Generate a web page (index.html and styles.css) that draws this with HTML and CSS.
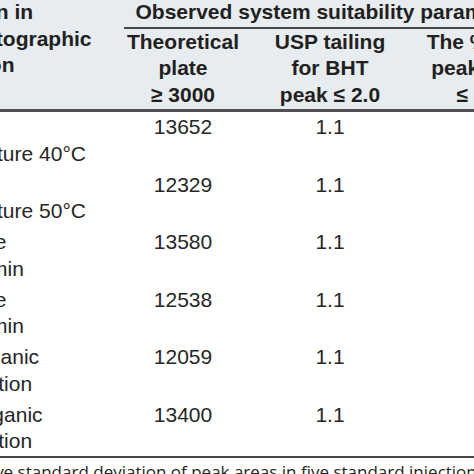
FILE: index.html
```html
<!DOCTYPE html>
<html>
<head>
<meta charset="utf-8">
<link rel="stylesheet" href="styles.css">
</head>
<body>
<div class="sheet">
  <table class="results">
    <colgroup>
      <col class="c-cond">
      <col class="c-plate">
      <col class="c-tail">
      <col class="c-rsd">
    </colgroup>
    <thead>
      <tr>
        <th class="cond-head" rowspan="2">Variation in<br>chromatographic<br>condition</th>
        <th class="group-head" colspan="3"><div class="group-label">Observed system suitability parameters</div></th>
      </tr>
      <tr class="sub-row">
        <th>Theoretical<br>plate<br>≥ 3000</th>
        <th>USP tailing<br>for BHT<br>peak ≤ 2.0</th>
        <th>The %RSD<br>peak area<br>≤ 2.0</th>
      </tr>
    </thead>
    <tbody>
      <tr><td class="cond">Column<br>temperature 40°C</td><td>13652</td><td>1.1</td><td></td></tr>
      <tr><td class="cond">Column<br>temperature 50°C</td><td>12329</td><td>1.1</td><td></td></tr>
      <tr><td class="cond">Flow rate<br>0.9 mL/min</td><td>13580</td><td>1.1</td><td></td></tr>
      <tr><td class="cond">Flow rate<br>1.1 mL/min</td><td>12538</td><td>1.1</td><td></td></tr>
      <tr><td class="cond">Less organic<br>composition</td><td>12059</td><td>1.1</td><td></td></tr>
      <tr class="last"><td class="cond">More organic<br>composition</td><td>13400</td><td>1.1</td><td></td></tr>
    </tbody>
  </table>
  <p class="note">Relative standard deviation of peak areas in five standard injections</p>
</div>
</body>
</html>
```

FILE: styles.css
```css
html, body {
  margin: 0;
  padding: 0;
  background: #ffffff;
  overflow: hidden;
}

.sheet {
  width: 640px;
  margin-left: -85px;
  margin-top: -1px;
}

.results {
  border-collapse: separate;
  border-spacing: 0;
  table-layout: fixed;
  width: 641px;
  font-family: "Liberation Sans", Arial, sans-serif;
  font-size: 21px;
  line-height: 26.5px;
  color: rgb(35, 31, 32);
}

.c-cond { width: 194.5px; }
.c-plate { width: 147px; }
.c-tail { width: 147px; }
.c-rsd { width: 152.5px; }

thead th {
  background-color: rgb(230, 236, 239);
  font-weight: bold;
  text-align: center;
  vertical-align: top;
  padding: 0;
}

th.cond-head {
  text-align: left;
  padding-left: 5px;
  border-bottom: 3px solid rgb(80, 80, 82);
}

th.group-head {
  padding: 0 0 0 14px;
}

.group-label {
  padding-bottom: 1px;
  border-bottom: 2px solid rgb(70, 70, 72);
  text-align: left;
  padding-left: 12px;
  white-space: nowrap;
}

.sub-row th {
  padding: 0 0 1px 0;
  border-bottom: 3px solid rgb(80, 80, 82);
}

tbody td {
  vertical-align: top;
  text-align: center;
  padding: 2px 0 2.5px 0;
  color: rgb(38, 38, 38);
}

tbody td.cond {
  text-align: left;
  padding-left: 5px;
  white-space: nowrap;
}

tbody tr.last td {
  padding-bottom: 1px;
  border-bottom: 2px solid rgb(70, 70, 72);
}

.note {
  margin: 0;
  padding: 2px 0 0 36px;
  font-family: "Open Sans", sans-serif;
  font-size: 17px;
  line-height: 23px;
  color: rgb(35, 31, 32);
  white-space: nowrap;
}
```
